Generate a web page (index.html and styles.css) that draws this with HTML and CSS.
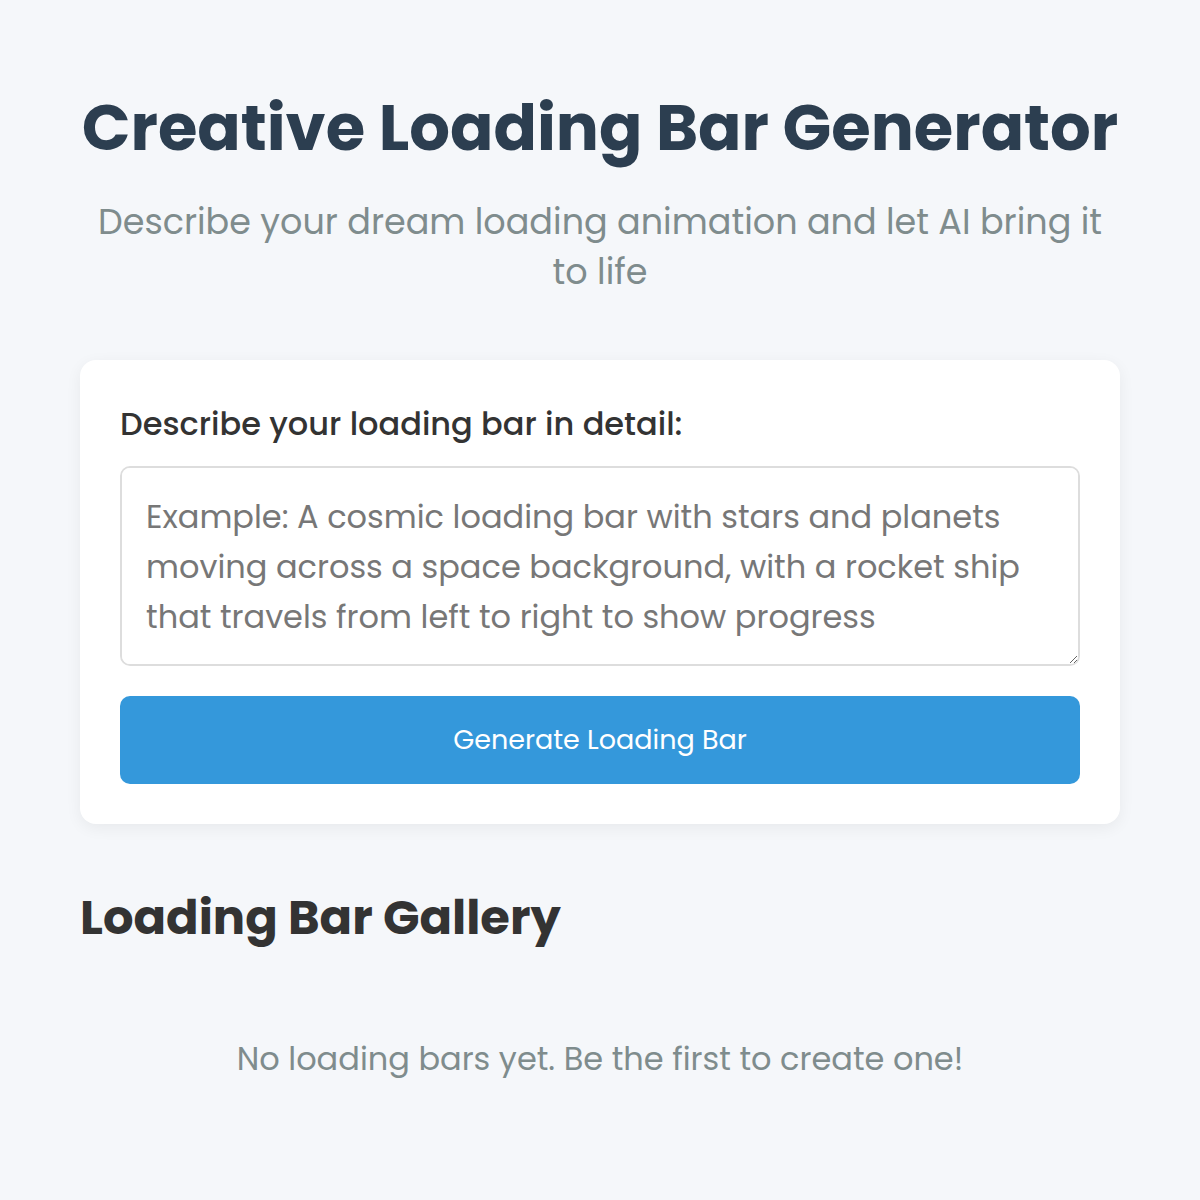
FILE: index.html
```html
<!DOCTYPE html>
<html>
<head>
  <title>Creative Loading Bar Generator</title>
  <link rel="stylesheet" href="styles.css">
</head>
<body>
  <div class="container">
    <header class="header">
      <h1>Creative Loading Bar Generator</h1>
      <p class="subtitle">Describe your dream loading animation and let AI bring it to life</p>
    </header>

    <form class="card" id="generator">
      <label for="prompt">Describe your loading bar in detail:</label>
      <textarea id="prompt" placeholder="Example: A cosmic loading bar with stars and planets moving across a space background, with a rocket ship that travels from left to right to show progress"></textarea>
      <button type="submit" class="generate-btn">Generate Loading Bar</button>
    </form>

    <section class="gallery">
      <h2>Loading Bar Gallery</h2>
      <p class="empty">No loading bars yet. Be the first to create one!</p>
    </section>
  </div>
</body>
</html>
```

FILE: styles.css
```css
* {
  box-sizing: border-box;
}

body {
  margin: 0;
  background: #f5f7fa;
  font-family: 'Poppins', 'Inter', sans-serif;
  color: #333;
}

.container {
  width: 1040px;
  margin: 0 auto;
  padding: 90px 0 40px;
}

.header {
  text-align: center;
  margin-bottom: 63px;
}

h1 {
  margin: 0 0 30px;
  font-size: 64px;
  font-weight: 700;
  line-height: 1.2;
  color: #2c3e50;
}

.subtitle {
  margin: 0;
  font-size: 35px;
  font-weight: 400;
  line-height: 50px;
  color: #7f8c8d;
}

.card {
  background: #fff;
  border-radius: 16px;
  padding: 40px;
  box-shadow: 0 4px 16px rgba(0, 0, 0, 0.06);
  display: flex;
  flex-direction: column;
}

label {
  font-size: 32px;
  font-weight: 500;
  line-height: 48px;
  color: #333;
  margin-bottom: 18px;
}

textarea {
  height: 200px;
  padding: 24px;
  border: 2px solid #ddd;
  border-radius: 10px;
  font-family: inherit;
  font-size: 32px;
  line-height: 50px;
  color: #333;
  resize: vertical;
  margin-bottom: 30px;
}

textarea::placeholder {
  color: #777;
}

.generate-btn {
  height: 88px;
  border: none;
  border-radius: 10px;
  background: #3498db;
  color: #fff;
  font-family: inherit;
  font-size: 27px;
  font-weight: 400;
}

.gallery h2 {
  margin: 64px 0 0;
  font-size: 48px;
  font-weight: 700;
  line-height: 60px;
  color: #333;
}

.empty {
  margin: 87px 0 0;
  text-align: center;
  font-size: 32px;
  font-weight: 400;
  color: #7f8c8d;
}
```
